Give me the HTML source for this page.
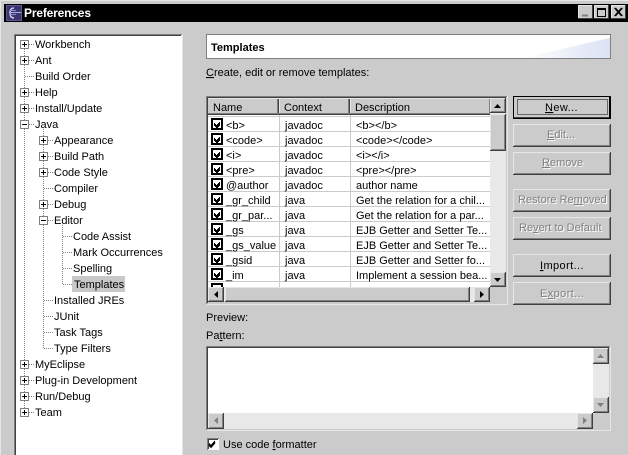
<!DOCTYPE html>
<html><head><meta charset="utf-8"><style>
html,body{margin:0;padding:0;background:#cbcbcb;overflow:hidden}
svg{display:block;font-family:"Liberation Sans",Arial,sans-serif;font-size:11px;fill:#000}
.d{fill:#808080}.s{fill:#fff}.u{text-decoration:underline}
</style></head><body>
<svg width="628" height="455" viewBox="0 0 628 455" xmlns="http://www.w3.org/2000/svg">
<defs>
<linearGradient id="g" x1="0" x2="1" y1="0" y2="0"><stop offset="0" stop-color="#fff"/><stop offset="1" stop-color="#dbe2f4"/></linearGradient>
<g id="p"><rect x=".5" y=".5" width="8" height="8" fill="#fff" stroke="#808080"/><path d="M2 4.5h5M4.5 2v5" stroke="#000" fill="none"/></g>
<g id="m"><rect x=".5" y=".5" width="8" height="8" fill="#fff" stroke="#808080"/><path d="M2 4.5h5" stroke="#000" fill="none"/></g>
<g id="c"><rect x="1" y="1" width="10" height="10" fill="#fff" stroke="#000" stroke-width="2"/><path d="M3 5h1v1h1v1h1V6h1V5h1V4h1v3H9v1H8v1H7v1H5V9H4V8H3Z" fill="#000"/></g>
<g id="sb"><rect width="16" height="15" fill="#cbcbcb"/><path d="M0 14.500h15.500V0" stroke="#404040" fill="none"/><path d="M1 13.500h13.500V1" stroke="#808080" fill="none"/><path d="M.5 14V.5H15" stroke="#e6e6e6" fill="none"/></g>
<g id="sc"><rect width="16" height="16" fill="#cbcbcb"/><path d="M0 15.500h15.500V0" stroke="#404040" fill="none"/><path d="M1 14.500h13.500V1" stroke="#808080" fill="none"/><path d="M.5 15V.5H15" stroke="#e6e6e6" fill="none"/></g>
<g id="b"><rect width="98" height="23" fill="#cbcbcb"/><path d="M0 22.500h97.500V0" stroke="#404040" fill="none"/><path d="M1 21.500h95.500V1" stroke="#808080" fill="none"/><path d="M.5 22V.5H97" stroke="#e6e6e6" fill="none"/></g>
</defs>
<rect width="628" height="455" fill="#cbcbcb"/>
<path d="M0 .5H628M.5 0V455" stroke="#e6e6e6"/>

<!-- title bar -->
<rect x="4" y="4" width="624" height="18" fill="#000"/>
<rect x="6" y="5" width="16" height="16" fill="#3a3470"/>
<rect x="6.500" y="5.500" width="15" height="15" fill="none" stroke="#5c5a8c"/>
<path d="M14 8c-3 0-4 2-4 5s1 5 4 5" fill="none" stroke="#c8c8e4" stroke-width="1.500"/><path d="M9 12.500h12" stroke="#aab0e8" fill="none"/><path d="M10 10.500h6M10 14.500h6" stroke="#8c8cc8" fill="none"/>
<text x="24" y="17" font-weight="bold" font-size="12" style="fill:#fff" textLength="67">Preferences</text>
<g>
<rect x="578" y="5" width="15" height="14" fill="#cbcbcb"/><path d="M578 18.500h14.500V5" stroke="#404040" fill="none"/><path d="M578.500 18V5.500H592" stroke="#e6e6e6" fill="none"/><path d="M582 15.500h6" stroke="#808080" stroke-width="2" fill="none"/>
<rect x="594" y="5" width="15" height="14" fill="#cbcbcb"/><path d="M594 18.500h14.500V5" stroke="#404040" fill="none"/><path d="M594.500 18V5.500H608" stroke="#e6e6e6" fill="none"/><rect x="597.500" y="8.500" width="8" height="8" fill="none" stroke="#000"/><path d="M597 9.500h9" stroke="#000"/>
<rect x="611" y="5" width="15" height="14" fill="#cbcbcb"/><path d="M611 18.500h14.500V5" stroke="#404040" fill="none"/><path d="M611.500 18V5.500H625" stroke="#e6e6e6" fill="none"/><path d="M614.500 8l7 8M615.500 8l7 8M621.500 8l-7 8M622.500 8l-7 8" stroke="#000" fill="none"/>
</g>

<!-- tree -->
<rect x="14" y="34" width="169" height="421" fill="#fff"/>
<path d="M14.500 455V34.500H182" stroke="#808080" fill="none"/><path d="M15.500 455V35.500H181" stroke="#404040" fill="none"/><path d="M182.500 34V455" stroke="#e6e6e6" fill="none"/>
<rect x="72" y="276" width="53" height="16" fill="#c8c8c8"/>
<g stroke="#808080" stroke-dasharray="1 1" fill="none">
<path d="M24.500 49V412M43.500 129V348M62.500 225V284"/>
<path d="M29 44.500h5M29 60.500h5M25 76.500h9M29 92.500h5M29 108.500h5M29 124.500h5M29 364.500h5M29 380.500h5M29 396.500h5M29 412.500h5"/>
<path d="M48 140.500h5M48 156.500h5M48 172.500h5M44 188.500h9M48 204.500h5M48 220.500h5M44 300.500h9M44 316.500h9M44 332.500h9M44 348.500h9"/>
<path d="M63 236.500h9M63 252.500h9M63 268.500h9M63 284.500h9"/>
</g>
<use href="#p" x="20" y="40"/><use href="#p" x="20" y="56"/><use href="#p" x="20" y="88"/><use href="#p" x="20" y="104"/><use href="#m" x="20" y="120"/>
<use href="#p" x="20" y="360"/><use href="#p" x="20" y="376"/><use href="#p" x="20" y="392"/><use href="#p" x="20" y="408"/>
<use href="#p" x="39" y="136"/><use href="#p" x="39" y="152"/><use href="#p" x="39" y="168"/><use href="#p" x="39" y="200"/><use href="#m" x="39" y="216"/>
<text x="35" y="48">Workbench</text><text x="35" y="64">Ant</text><text x="35" y="80">Build Order</text><text x="35" y="96">Help</text><text x="35" y="112">Install/Update</text><text x="35" y="128">Java</text>
<text x="54" y="144">Appearance</text><text x="54" y="160">Build Path</text><text x="54" y="176">Code Style</text><text x="54" y="192">Compiler</text><text x="54" y="208">Debug</text><text x="54" y="224">Editor</text>
<text x="73" y="240">Code Assist</text><text x="73" y="256">Mark Occurrences</text><text x="73" y="272">Spelling</text><text x="74" y="288">Templates</text>
<text x="54" y="304">Installed JREs</text><text x="54" y="320">JUnit</text><text x="54" y="336">Task Tags</text><text x="54" y="352">Type Filters</text>
<text x="35" y="368">MyEclipse</text><text x="35" y="384">Plug-in Development</text><text x="35" y="400">Run/Debug</text><text x="35" y="416">Team</text>

<!-- header -->
<rect x="206.500" y="34.500" width="404" height="24" fill="#fff" stroke="#808080"/>
<path d="M523 58C560 50 585 43 610 38V58Z" fill="url(#g)"/>
<rect x="206.500" y="34.500" width="404" height="24" fill="none" stroke="#808080"/>
<text x="211" y="51" font-weight="bold">Templates</text>
<text x="206" y="76"><tspan class="u">C</tspan>reate, edit or remove templates:</text>

<!-- table -->
<rect x="206" y="96" width="302" height="209" fill="#cbcbcb"/>
<path d="M206.500 304V96.500H507" stroke="#808080" fill="none"/><path d="M207.500 303V97.500H506" stroke="#404040" fill="none"/><path d="M207 304.500H507.500V96" stroke="#e6e6e6" fill="none"/>
<rect x="208" y="115" width="282" height="172" fill="#fff"/>
<g stroke="#404040" fill="none"><path d="M278.500 98v16M349.500 98v16M208 114.500h282"/></g>
<g stroke="#808080" fill="none"><path d="M277.500 99v15M348.500 99v15M489.500 99v15M208 113.500h282"/></g>
<g stroke="#e6e6e6" fill="none"><path d="M279.500 98v15M350.500 98v15M208 98.500h282"/></g>
<text x="213" y="111">Name</text><text x="284" y="111">Context</text><text x="355" y="111">Description</text>
<g stroke="#cbcbcb" fill="none">
<path d="M279.500 115v172M350.500 115v172"/>
<path d="M208 116.500h282M208 131.500h282M208 146.500h282M208 161.500h282M208 176.500h282M208 191.500h282M208 206.500h282M208 221.500h282M208 236.500h282M208 251.500h282M208 266.500h282M208 281.500h282"/>
</g>
<use href="#c" x="211" y="118"/><use href="#c" x="211" y="133"/><use href="#c" x="211" y="148"/><use href="#c" x="211" y="163"/><use href="#c" x="211" y="178"/><use href="#c" x="211" y="193"/><use href="#c" x="211" y="208"/><use href="#c" x="211" y="223"/><use href="#c" x="211" y="238"/><use href="#c" x="211" y="253"/><use href="#c" x="211" y="268"/><rect x="211" y="283" width="12" height="4" fill="#000"/><rect x="213" y="285" width="8" height="2" fill="#fff"/>
<text x="226" y="129">&lt;b&gt;</text><text x="285" y="129">javadoc</text><text x="356" y="129">&lt;b&gt;&lt;/b&gt;</text>
<text x="226" y="144">&lt;code&gt;</text><text x="285" y="144">javadoc</text><text x="356" y="144">&lt;code&gt;&lt;/code&gt;</text>
<text x="226" y="159">&lt;i&gt;</text><text x="285" y="159">javadoc</text><text x="356" y="159">&lt;i&gt;&lt;/i&gt;</text>
<text x="226" y="174">&lt;pre&gt;</text><text x="285" y="174">javadoc</text><text x="356" y="174">&lt;pre&gt;&lt;/pre&gt;</text>
<text x="226" y="189">@author</text><text x="285" y="189">javadoc</text><text x="356" y="189">author name</text>
<text x="226" y="204">_gr_child</text><text x="285" y="204">java</text><text x="356" y="204">Get the relation for a chil...</text>
<text x="226" y="219">_gr_par...</text><text x="285" y="219">java</text><text x="356" y="219">Get the relation for a par...</text>
<text x="226" y="234">_gs</text><text x="285" y="234">java</text><text x="356" y="234">EJB Getter and Setter Te...</text>
<text x="226" y="249">_gs_value</text><text x="285" y="249">java</text><text x="356" y="249">EJB Getter and Setter Te...</text>
<text x="226" y="264">_gsid</text><text x="285" y="264">java</text><text x="356" y="264">EJB Getter and Setter fo...</text>
<text x="226" y="279">_im</text><text x="285" y="279">java</text><text x="356" y="279">Implement a session bea...</text>

<!-- table v scroll -->
<rect x="490" y="113" width="16" height="159" fill="#e8e8e8"/>
<use href="#sb" x="490" y="98"/><path d="M494 108h7l-3.500-4z" fill="#000"/>
<rect x="490" y="114" width="16" height="37" fill="#cbcbcb"/><path d="M490 150.500h15.500V114" stroke="#404040" fill="none"/><path d="M491 149.500h13.500V115" stroke="#808080" fill="none"/><path d="M490.500 150V114.500H505" stroke="#e6e6e6" fill="none"/>
<use href="#sb" x="490" y="272"/><path d="M494 278h7l-3.500 4z" fill="#000"/>
<!-- table h scroll -->
<rect x="208" y="287" width="282" height="15" fill="#e8e8e8"/>
<use href="#sb" x="208" y="287"/><path d="M218 291v7l-4-3.500z" fill="#000"/>
<rect x="225" y="287" width="245" height="15" fill="#cbcbcb"/>
<path d="M225 301.500h244.500V287" stroke="#404040" fill="none"/><path d="M226 300.500h242.500V288" stroke="#808080" fill="none"/><path d="M225.500 301V287.500H469" stroke="#e6e6e6" fill="none"/>
<use href="#sb" x="474" y="287"/><path d="M480 291v7l4-3.500z" fill="#000"/>

<!-- buttons -->
<use href="#b" x="513" y="96"/><path d="M513.500 96.500h97v22h-97z" fill="none" stroke="#000"/><path d="M609.500 97v21H514" stroke="#000" fill="none"/>
<rect x="517.500" y="99.500" width="90" height="15" fill="none" stroke="#000" stroke-dasharray="1 1"/>
<text x="545" y="111" letter-spacing=".4"><tspan class="u">N</tspan>ew...</text>
<use href="#b" x="513" y="124"/><text x="548" y="139" class="s"><tspan class="u">E</tspan>dit...</text><text x="547" y="138" class="d"><tspan class="u">E</tspan>dit...</text>
<use href="#b" x="513" y="152"/><text x="543" y="167" class="s"><tspan class="u">R</tspan>emove</text><text x="542" y="166" class="d"><tspan class="u">R</tspan>emove</text>
<use href="#b" x="513" y="189"/><text x="519" y="204" class="s">Restore Re<tspan class="u">m</tspan>oved</text><text x="518" y="203" class="d">Restore Re<tspan class="u">m</tspan>oved</text>
<use href="#b" x="513" y="217"/><text x="520" y="232" class="s">Re<tspan class="u">v</tspan>ert to Default</text><text x="519" y="231" class="d">Re<tspan class="u">v</tspan>ert to Default</text>
<use href="#b" x="513" y="254"/><text x="540" y="269" letter-spacing=".4"><tspan class="u">I</tspan>mport...</text>
<use href="#b" x="513" y="282"/><text x="541" y="298" class="s" letter-spacing=".4">E<tspan class="u">x</tspan>port...</text><text x="540" y="297" class="d" letter-spacing=".4">E<tspan class="u">x</tspan>port...</text>

<text x="206" y="321">Preview:</text>
<text x="206" y="339">Pa<tspan class="u">t</tspan>tern:</text>

<!-- pattern -->
<rect x="206" y="346" width="405" height="85" fill="#cbcbcb"/>
<path d="M206.500 430V346.500H610" stroke="#808080" fill="none"/><path d="M207.500 429V347.500H609" stroke="#404040" fill="none"/><path d="M207 430.500H610.500V346" stroke="#e6e6e6" fill="none"/>
<rect x="208" y="348" width="385" height="65" fill="#fff"/>
<rect x="593" y="348" width="16" height="65" fill="#e8e8e8"/>
<rect x="208" y="413" width="385" height="16" fill="#e8e8e8"/>
<use href="#sc" x="593" y="348"/><path d="M597 358h7l-3.500-4z" fill="#808080"/><path d="M597 359h8" stroke="#e6e6e6"/>
<use href="#sc" x="593" y="397"/><path d="M597 403h7l-3.500 4z" fill="#808080"/>
<use href="#sc" x="208" y="413"/><path d="M218 417v7l-4-3.500z" fill="#808080"/>
<use href="#sc" x="577" y="413"/><path d="M583 417v7l4-3.500z" fill="#808080"/>

<!-- checkbox -->
<rect x="207" y="438" width="12" height="12" fill="#fff"/>
<path d="M207.500 450V438.500H219" stroke="#808080" fill="none"/><path d="M208.500 449V439.500H218" stroke="#404040" fill="none"/><path d="M209 443.500l2 2 4-4.500M209 444.500l2 2 4-4.500M209 445.500l2 2 4-4.500" stroke="#000" fill="none"/>
<text x="223" y="448">Use code <tspan class="u">f</tspan>ormatter</text>
</svg>
</body></html>
